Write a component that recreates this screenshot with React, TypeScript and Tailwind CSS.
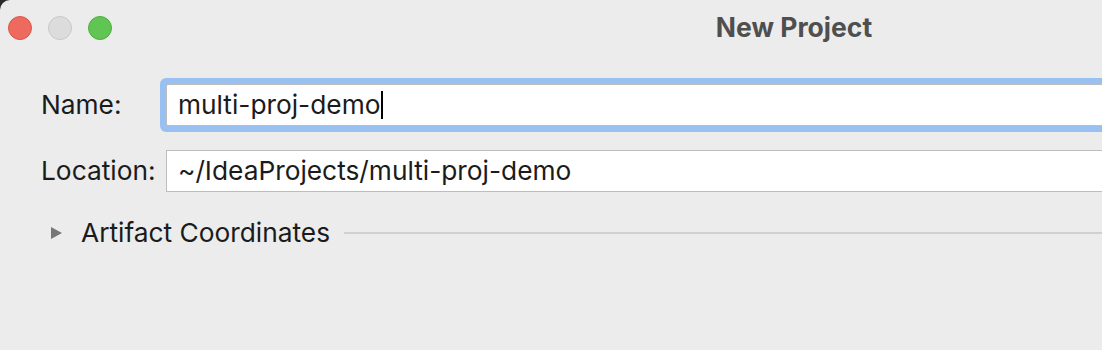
import React from 'react';

const font = { fontFamily: 'Inter, "Noto Sans", sans-serif' };

const TrafficLights: React.FC = () => (
  <div className="flex items-center gap-[16px] pl-[8px]">
    <span className="block h-[24px] w-[24px] rounded-full border border-[#d9574f] bg-[#ee6a5f]" />
    <span className="block h-[24px] w-[24px] rounded-full border border-[#c8c8c8] bg-[#dcdcdc]" />
    <span className="block h-[24px] w-[24px] rounded-full border border-[#4fae3f] bg-[#61c554]" />
  </div>
);

export default function App() {
  return (
    <div className="h-[350px] w-full overflow-hidden bg-[#2b2b2b]" style={font}>
      <div className="h-[350px] w-[1588px] rounded-tl-[10px] bg-[#ececec]">
        {/* title bar */}
        <div className="grid h-[56px] grid-cols-[1fr_auto_1fr] items-center">
          <TrafficLights />
          <div className="text-[26.5px] font-bold text-[#4f4f4f]">New Project</div>
          <div />
        </div>

        {/* form */}
        <div className="grid grid-cols-[125px_1fr] items-center gap-y-[24px] pl-[41px] pt-[28px] text-[26.3px] text-[#1b1b1b]">
          <label>Name:</label>
          <div className="flex h-[42px] items-center rounded-[2px] border border-[#bdbdbd] bg-white pl-[11px] shadow-[0_0_0_6px_#98c1f1]">
            <span>multi-proj-demo</span>
            <span className="ml-[1px] block h-[28px] w-[2px] bg-black" />
          </div>

          <label>Location:</label>
          <div className="flex h-[42px] items-center border border-[#bdbdbd] bg-white pl-[11px]">
            <span>~/IdeaProjects/multi-proj-demo</span>
          </div>
        </div>

        {/* collapsible section */}
        <div className="mt-[26px] flex h-[30px] items-center pl-[51px] text-[26.3px] text-[#1b1b1b]">
          <svg width="11" height="12" viewBox="0 0 11 12" className="shrink-0">
            <path d="M0 0 L11 6 L0 12 Z" fill="#777777" />
          </svg>
          <span className="ml-[19px]">Artifact Coordinates</span>
          <div className="ml-[14px] h-[2px] flex-1 bg-[#d0d0d0]" />
        </div>
      </div>
    </div>
  );
}
